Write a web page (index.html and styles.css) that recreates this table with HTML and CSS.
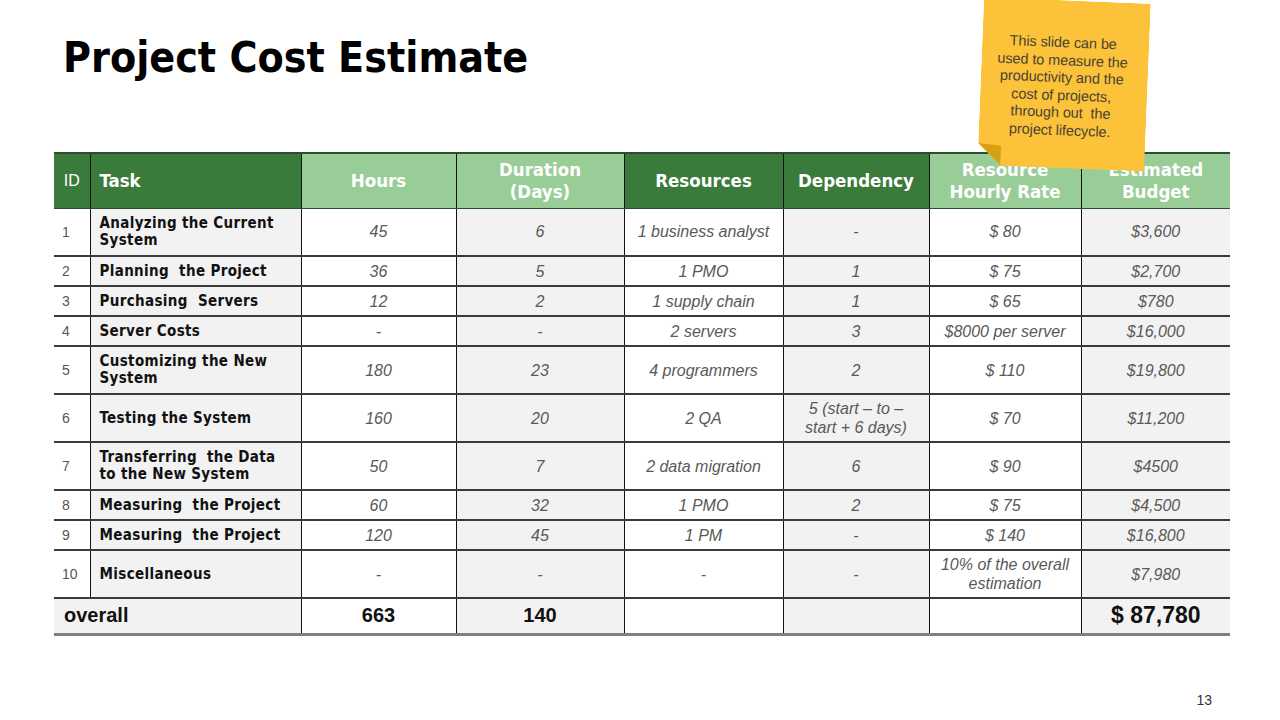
FILE: index.html
```html
<!DOCTYPE html>
<html lang="en">
<head>
<meta charset="utf-8">
<title>Project Cost Estimate</title>
<link rel="stylesheet" href="styles.css">
</head>
<body>
<div class="slide">
  <h1 class="title">Project Cost Estimate</h1>

  <div class="note">
    <p class="note-text">This slide can be used to measure the productivity and the cost of projects, through out&nbsp; the project lifecycle.</p>
  </div>

  <table class="grid">
    <colgroup>
      <col class="c-id"><col class="c-task"><col class="c-hours"><col class="c-dur">
      <col class="c-res"><col class="c-dep"><col class="c-rate"><col class="c-bud">
    </colgroup>
    <thead>
      <tr class="head">
        <th class="dark hid">ID</th>
        <th class="dark htask">Task</th>
        <th class="light">Hours</th>
        <th class="light">Duration<br>(Days)</th>
        <th class="dark">Resources</th>
        <th class="dark">Dependency</th>
        <th class="light">Resource<br>Hourly Rate</th>
        <th class="light">Estimated<br>Budget</th>
      </tr>
    </thead>
    <tbody>
      <tr class="tall">
        <td class="id">1</td><td class="task">Analyzing the Current System</td><td class="v">45</td><td class="v g">6</td>
        <td class="v">1 business analyst</td><td class="v g">-</td><td class="v">$ 80</td><td class="v g">$3,600</td>
      </tr>
      <tr class="short">
        <td class="id">2</td><td class="task">Planning&nbsp; the Project</td><td class="v">36</td><td class="v g">5</td>
        <td class="v">1 PMO</td><td class="v g">1</td><td class="v">$ 75</td><td class="v g">$2,700</td>
      </tr>
      <tr class="short">
        <td class="id">3</td><td class="task">Purchasing&nbsp; Servers</td><td class="v">12</td><td class="v g">2</td>
        <td class="v">1 supply chain</td><td class="v g">1</td><td class="v">$ 65</td><td class="v g">$780</td>
      </tr>
      <tr class="short">
        <td class="id">4</td><td class="task">Server Costs</td><td class="v">-</td><td class="v g">-</td>
        <td class="v">2 servers</td><td class="v g">3</td><td class="v">$8000 per server</td><td class="v g">$16,000</td>
      </tr>
      <tr class="tall">
        <td class="id">5</td><td class="task">Customizing the New System</td><td class="v">180</td><td class="v g">23</td>
        <td class="v">4 programmers</td><td class="v g">2</td><td class="v">$ 110</td><td class="v g">$19,800</td>
      </tr>
      <tr class="tall">
        <td class="id">6</td><td class="task">Testing the System</td><td class="v">160</td><td class="v g">20</td>
        <td class="v">2 QA</td><td class="v g">5 (start – to –<br>start + 6 days)</td><td class="v">$ 70</td><td class="v g">$11,200</td>
      </tr>
      <tr class="tall">
        <td class="id">7</td><td class="task">Transferring&nbsp; the Data<br>to the New System</td><td class="v">50</td><td class="v g">7</td>
        <td class="v">2 data migration</td><td class="v g">6</td><td class="v">$ 90</td><td class="v g">$4500</td>
      </tr>
      <tr class="short">
        <td class="id">8</td><td class="task">Measuring&nbsp; the Project</td><td class="v">60</td><td class="v g">32</td>
        <td class="v">1 PMO</td><td class="v g">2</td><td class="v">$ 75</td><td class="v g">$4,500</td>
      </tr>
      <tr class="short">
        <td class="id">9</td><td class="task">Measuring&nbsp; the Project</td><td class="v">120</td><td class="v g">45</td>
        <td class="v">1 PM</td><td class="v g">-</td><td class="v">$ 140</td><td class="v g">$16,800</td>
      </tr>
      <tr class="tall">
        <td class="id">10</td><td class="task">Miscellaneous</td><td class="v">-</td><td class="v g">-</td>
        <td class="v">-</td><td class="v g">-</td><td class="v">10% of the overall<br>estimation</td><td class="v g">$7,980</td>
      </tr>
      <tr class="total">
        <td class="t-label" colspan="2">overall</td><td class="t-num">663</td><td class="t-num g">140</td>
        <td class="t-num"></td><td class="t-num g"></td><td class="t-num"></td><td class="t-big g">$ 87,780</td>
      </tr>
    </tbody>
  </table>

  <div class="page-num">13</div>
</div>
</body>
</html>
```

FILE: styles.css
```css
html, body {
  margin: 0;
  padding: 0;
  background: #ffffff;
}

.slide {
  position: relative;
  width: 1280px;
  height: 720px;
  overflow: hidden;
  background: #ffffff;
  font-family: "Liberation Sans", Arial, sans-serif;
}

.title {
  margin: 0;
  padding: 33px 0 0 63px;
  height: 119px;
  box-sizing: border-box;
  font-family: "DejaVu Sans Condensed", "DejaVu Sans", sans-serif;
  font-stretch: condensed;
  font-weight: bold;
  font-size: 42.5px;
  line-height: 50px;
  letter-spacing: 0;
  color: #000000;
}

/* sticky note */
.note {
  position: absolute;
  left: 984px;
  top: -3px;
  width: 167px;
  height: 168px;
  background: #fcc23a;
  transform: rotate(2.3deg);
  transform-origin: top left;
  clip-path: polygon(0 0, 100% 0, 100% 100%, 14% 100%, 0 87%);
  z-index: 2;
}

.note::after {
  content: "";
  position: absolute;
  left: 0;
  top: 87%;
  width: 14%;
  height: 13%;
  background: #d9a015;
  clip-path: polygon(0 0, 100% 8%, 100% 100%);
}

.note-text {
  margin: 0;
  padding: 34px 17px 0 12px;
  text-align: center;
  font-family: "Liberation Sans", Arial, sans-serif;
  font-size: 14.5px;
  line-height: 17.6px;
  letter-spacing: -0.1px;
  color: #4a4236;
}

/* table */
.grid {
  margin-left: 54px;
  margin-top: 33px;
  width: 1176px;
  border-collapse: collapse;
  table-layout: fixed;
}

.c-id { width: 36px; }
.c-task { width: 211px; }
.c-hours { width: 155px; }
.c-dur { width: 168px; }
.c-res { width: 159px; }
.c-dep { width: 146px; }
.c-rate { width: 152px; }
.c-bud { width: 149px; }

.grid th,
.grid td {
  border-left: 1px solid #111111;
  border-bottom: 2px solid #3a3a3a;
  padding: 0;
}

.grid th:first-child,
.grid td:first-child {
  border-left: none;
}

.head {
  height: 55px;
  border-top: 2px solid #2e4d2e;
}

.head th {
  font-family: "DejaVu Sans Condensed", "DejaVu Sans", sans-serif;
  font-stretch: condensed;
  font-weight: bold;
  font-size: 18.5px;
  line-height: 22px;
  color: #ffffff;
  text-align: center;
  vertical-align: middle;
  border-bottom: 1px solid #2e4d2e;
}

.head .dark { background: #3a7a3a; }
.head .light { background: #99cd97; }

.head .hid {
  font-family: "Liberation Sans", Arial, sans-serif;
  font-weight: normal;
  font-size: 16px;
}

.head .htask {
  text-align: left;
  padding-left: 9px;
}

.tall { height: 48px; }
.short { height: 30px; }
.total { height: 36px; }

.id {
  font-family: "Liberation Sans", Arial, sans-serif;
  font-size: 14px;
  color: #555555;
  text-align: left;
  padding-left: 8px !important;
  background: #ffffff;
}

.task {
  font-family: "DejaVu Sans Condensed", "DejaVu Sans", sans-serif;
  font-stretch: condensed;
  font-weight: bold;
  font-size: 15px;
  line-height: 17px;
  letter-spacing: 0.35px;
  color: #111111;
  background: #f2f2f2;
  padding: 0 4px 0 9px !important;
  text-align: left;
}

.v {
  font-family: "Liberation Sans", Arial, sans-serif;
  font-style: italic;
  font-size: 16px;
  line-height: 19px;
  color: #595959;
  text-align: center;
  background: #ffffff;
}

.g { background: #f2f2f2; }

.total td {
  border-bottom: 3px solid #7f7f7f;
  font-family: "Liberation Sans", Arial, sans-serif;
  font-weight: bold;
  color: #111111;
}

.t-label {
  font-size: 20px;
  text-align: left;
  padding-left: 10px !important;
  background: #f2f2f2;
}

.t-num {
  font-size: 20px;
  text-align: center;
  background: #ffffff;
}

.t-num.g { background: #f2f2f2; }

.t-big {
  font-size: 23px;
  text-align: center;
  background: #f2f2f2;
}

.page-num {
  position: absolute;
  right: 68px;
  top: 692px;
  font-family: "Liberation Sans", Arial, sans-serif;
  font-size: 14px;
  color: #333333;
}
```
